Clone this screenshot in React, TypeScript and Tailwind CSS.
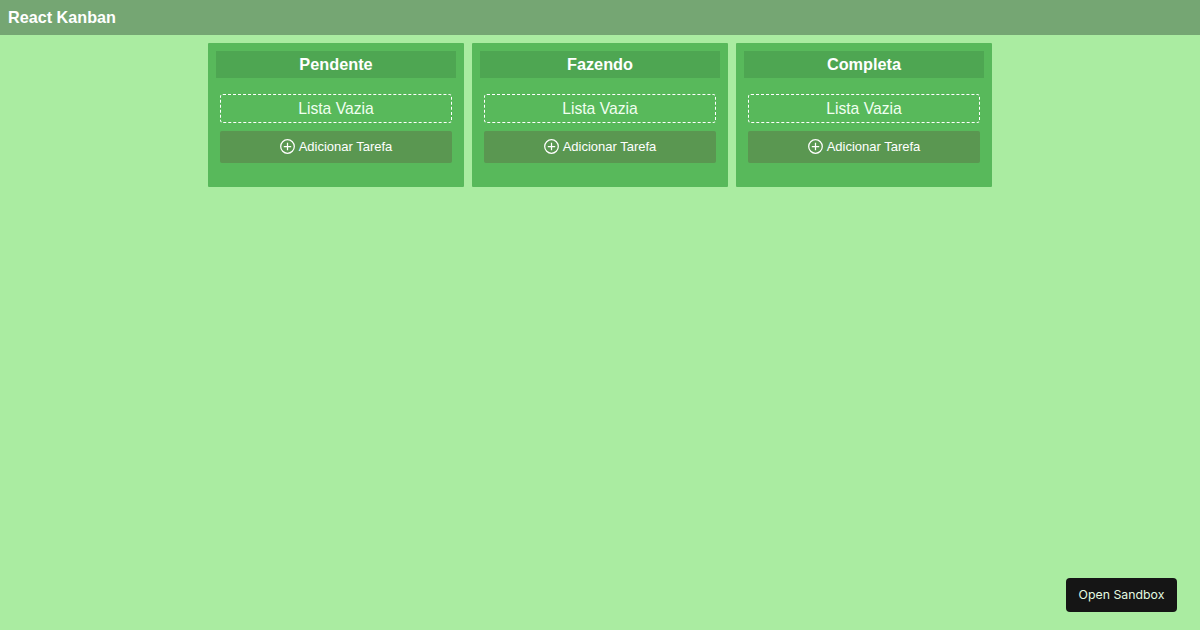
const columns = ['Pendente', 'Fazendo', 'Completa'];

function PlusIcon() {
  return (
    <svg width="15" height="15" viewBox="0 0 15 15" fill="none" stroke="white" strokeWidth="1.25" className="mb-px">
      <circle cx="7.5" cy="7.5" r="6.8" />
      <path d="M7.5 3.8v7.4M3.8 7.5h7.4" />
    </svg>
  );
}

function Column({ title }: { title: string }) {
  return (
    <div className="w-64 rounded-[1px] bg-[#58b95b] p-2 pb-6">
      <h2 className="h-[27px] bg-[#4ea652] text-center text-[16.3px] leading-[27px] font-bold text-white">{title}</h2>
      <div className="mx-1 mt-4 flex h-[29px] items-center justify-center rounded-[3px] border border-dashed border-white text-[15.7px] text-[#f0fff0]">
        Lista Vazia
      </div>
      <button className="mx-1 mt-2 flex h-8 w-[232px] items-center justify-center gap-1 rounded-[2px] bg-[#5a9751] text-[13px] text-white">
        <PlusIcon />
        Adicionar Tarefa
      </button>
    </div>
  );
}

export default function App() {
  return (
    <div className="relative h-[630px] overflow-hidden bg-[#aaeca1] font-['Liberation_Sans',sans-serif]">
      <header className="h-[35px] bg-[#75a673] px-2 text-[16.2px] leading-[35px] font-bold text-white">React Kanban</header>
      <main className="mt-2 flex justify-center gap-2">
        {columns.map((title) => (
          <Column key={title} title={title} />
        ))}
      </main>
      <button className="absolute right-[23px] bottom-[18px] h-[34px] w-[111px] rounded-[4px] bg-[#151515] font-['Inter',sans-serif] text-[12.3px] text-[#e4fbe0]">
        Open Sandbox
      </button>
    </div>
  );
}
